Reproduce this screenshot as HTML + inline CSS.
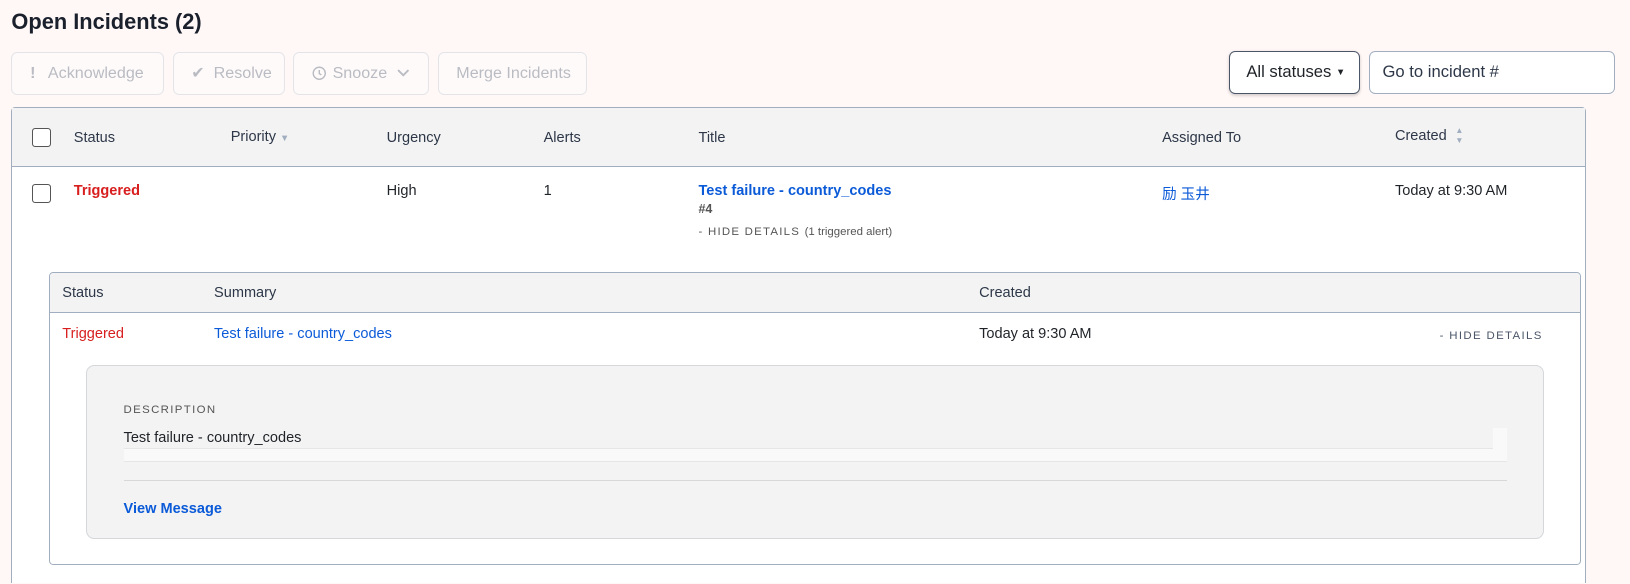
<!DOCTYPE html>
<html><head><meta charset="utf-8"><style>
*{box-sizing:border-box;margin:0;padding:0}
html,body{width:1630px;height:584px;overflow:hidden;background:#fff8f7}
#w{zoom:1.0395;width:1568px;height:561px;overflow:hidden;position:relative;font-family:"Liberation Sans","Noto Sans CJK SC",sans-serif;color:#1f2328;font-size:14px}
.a{position:absolute;white-space:nowrap}
h1{position:absolute;left:11px;top:9px;font-size:21px;font-weight:bold;color:#1a202c}
.btn{position:absolute;top:50px;height:41px;border:1px solid #e2e4e8;border-radius:6px;color:#b9bcc2;font-size:15.5px;line-height:39px;padding-left:17px;background:#fffafa}
.t{position:absolute;left:11px;top:103px;width:1515px;height:458px;border:1px solid #a0aec0;border-bottom:none;border-radius:4px 4px 0 0;background:#fff}
.th{position:absolute;left:0;top:0;width:100%;height:57px;background:#f3f3f3;border-bottom:1px solid #a0aec0}
.cb{position:absolute;width:18px;height:18px;border:1.5px solid #555;border-radius:3px;background:#fff}
.h{color:#2d3748;font-size:14px}
.blue{color:#0b5ad8}
.red{color:#d81e1e}
.it{position:absolute;left:35px;top:158px;width:1474px;height:282px;border:1px solid #a0aec0;border-radius:4px}
.ith{position:absolute;left:0;top:0;width:100%;height:38px;background:#f3f3f3;border-bottom:1px solid #a0aec0;border-radius:4px 4px 0 0}
.box{position:absolute;left:35px;top:88px;width:1402px;height:168px;background:#f3f3f3;border:1px solid #d5d7da;border-radius:8px}
</style></head><body><div id="w">
<h1>Open Incidents (2)</h1>
<div class="btn" style="left:11px;width:147px"><b style="margin-right:12px">!</b>Acknowledge</div>
<div class="btn" style="left:166px;width:108px">✔&nbsp; Resolve</div>
<div class="btn" style="left:282px;width:131px"><svg width="14" height="14" viewBox="0 0 14 14" style="vertical-align:-2px;margin-right:6px"><circle cx="7" cy="7" r="5.8" fill="none" stroke="#b9bcc2" stroke-width="1.4"/><path d="M7 3.8V7.3L9 8.5" fill="none" stroke="#b9bcc2" stroke-width="1.4"/></svg>Snooze <svg width="14" height="10" viewBox="0 0 14 10" style="margin-left:4px"><path d="M2 2l5 5 5-5" fill="none" stroke="#b9bcc2" stroke-width="1.8"/></svg></div>
<div class="btn" style="left:421px;width:144px">Merge Incidents</div>
<div class="a" style="left:1182px;top:49px;width:126px;height:41px;border:1px solid #4a5568;border-radius:6px;background:#fff;font-size:16px;line-height:39px;padding-left:16px;box-shadow:0 1px 3px rgba(0,0,0,.2)">All statuses <span style="font-size:9px;vertical-align:2px">▼</span></div>
<div class="a" style="left:1317px;top:49px;width:237px;height:41px;border:1px solid #a0aec0;border-radius:6px;background:#fff;font-size:16px;line-height:39px;padding-left:12px;color:#2d3748">Go to incident #</div>
<div class="t">
<div class="th">
<div class="cb" style="left:19px;top:19px"></div>
<div class="a h" style="left:59px;top:21px">Status</div>
<div class="a h" style="left:210px;top:20px">Priority <span style="color:#a0aec0;font-size:9px">▼</span></div>
<div class="a h" style="left:360px;top:21px">Urgency</div>
<div class="a h" style="left:511px;top:21px">Alerts</div>
<div class="a h" style="left:660px;top:21px">Title</div>
<div class="a h" style="left:1106px;top:21px">Assigned To</div>
<div class="a h" style="left:1330px;top:19px">Created <span style="position:absolute;left:58px;top:-3px;color:#a0aec0;font-size:8px;line-height:10px">▲<br>▼</span></div>
</div>
<div class="cb" style="left:19px;top:73px"></div>
<div class="a red" style="left:59px;top:72px;font-weight:bold">Triggered</div>
<div class="a" style="left:360px;top:72px">High</div>
<div class="a" style="left:511px;top:72px">1</div>
<div class="a blue" style="left:660px;top:72px;font-weight:bold">Test failure - country_codes</div>
<div class="a" style="left:660px;top:90px;font-size:12px;font-weight:bold;color:#555">#4</div>
<div class="a" style="left:660px;top:113px;font-size:11px;color:#555;letter-spacing:1.2px">- HIDE DETAILS <span style="letter-spacing:0">(1 triggered alert)</span></div>
<div class="a blue" style="left:1106px;top:72px">励 玉井</div>
<div class="a" style="left:1330px;top:72px">Today at 9:30 AM</div>
<div class="it">
<div class="ith">
<div class="a h" style="left:12px;top:11px">Status</div>
<div class="a h" style="left:158px;top:11px">Summary</div>
<div class="a h" style="left:894px;top:11px">Created</div>
</div>
<div class="a red" style="left:12px;top:51px">Triggered</div>
<div class="a blue" style="left:158px;top:51px">Test failure - country_codes</div>
<div class="a" style="left:894px;top:51px">Today at 9:30 AM</div>
<div class="a" style="left:1337px;top:55px;font-size:11px;color:#4a5568;letter-spacing:1.3px">- HIDE DETAILS</div>
<div class="box">
<div class="a" style="left:35px;top:37px;font-size:11px;color:#555;letter-spacing:1.3px">DESCRIPTION</div>
<div class="a" style="left:35px;top:62px">Test failure - country_codes</div>
<div class="a" style="left:35px;top:79px;width:1331px;height:14px;background:#f9f9f9;border-top:1px solid #e6e6e6;border-bottom:1px solid #e6e6e6"></div>
<div class="a" style="left:1352px;top:60px;width:14px;height:20px;background:#f9f9f9"></div>
<div class="a" style="left:35px;top:110px;width:1331px;height:1px;background:#d8d8d8"></div>
<div class="a blue" style="left:35px;top:130px;font-weight:bold">View Message</div>
</div>
</div>
</div>
</div></body></html>
